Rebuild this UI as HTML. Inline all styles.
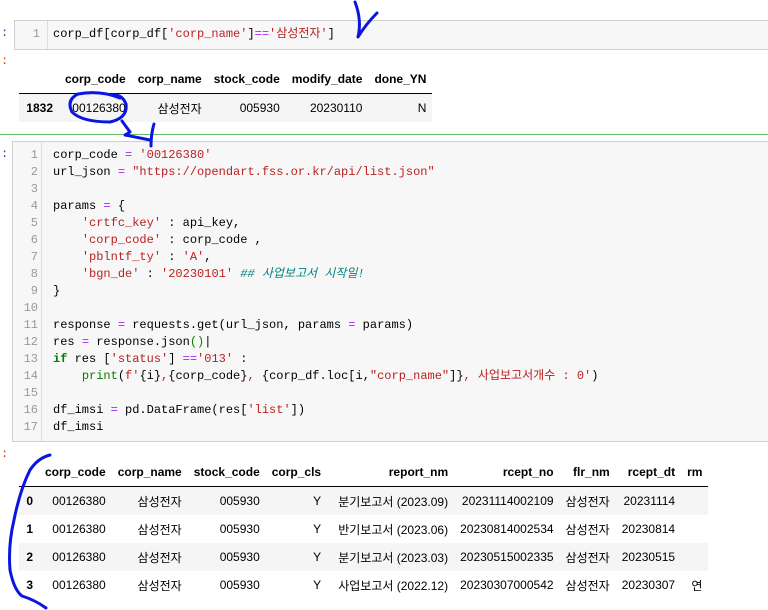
<!DOCTYPE html>
<html><head><meta charset="utf-8"><style>
body{margin:0;width:768px;height:610px;background:#fff;position:relative;overflow:hidden;font-family:"Liberation Sans","Noto Sans CJK KR",sans-serif;}
.abs{position:absolute}
.cell{position:absolute;background:#f7f7f7;border:1px solid #cfcfcf;}
.gut{position:absolute;top:0;bottom:0;border-right:1px solid #ddd;}
pre{margin:0;font-family:"Liberation Mono","Noto Sans CJK KR",monospace;font-size:12px;line-height:17px;color:#000;position:absolute}
.ln{color:#999;text-align:right}
.s{color:#ba2121}.o{color:#aa22ff}.k{color:#008000}.c{color:#008080;font-style:italic}
table{position:absolute;border-collapse:collapse;font-size:12px;color:#000}
th{font-weight:bold;text-align:right;padding:0 6px;height:28px}
td{text-align:right;padding:0 6px;height:28px}
thead tr{border-bottom:1px solid #000}
tbody tr.sh{background:#f5f5f5}
.pr{position:absolute;font-size:12px;font-family:"Liberation Mono",monospace}
</style></head><body>
<div class="pr" style="left:1px;top:26px;color:#303f9f">:</div>
<div class="cell" style="left:14px;top:20px;width:754px;height:28px">
 <div class="gut" style="left:0;width:32px"></div>
 <pre class="ln" style="left:0;width:25px;top:5px">1</pre>
 <pre style="left:38px;top:5px">corp_df[corp_df[<span class="s">'corp_name'</span>]<span class="o">==</span><span class="s">'삼성전자'</span>]</pre>
</div>
<div class="pr" style="left:1px;top:54px;color:#d84315">:</div>
<table style="left:19px;top:65px">
<thead><tr><th style="width:28px"></th><th>corp_code</th><th>corp_name</th><th>stock_code</th><th>modify_date</th><th>done_YN</th></tr></thead>
<tbody><tr class="sh"><th>1832</th><td>00126380</td><td>삼성전자</td><td>005930</td><td>20230110</td><td>N</td></tr></tbody>
</table>
<div class="abs" style="left:0;top:134px;width:768px;height:1px;background:#66bb6a"></div>
<div class="pr" style="left:1px;top:147px;color:#303f9f">:</div>
<div class="cell" style="left:12px;top:141px;width:756px;height:299px">
 <div class="gut" style="left:0;width:28px"></div>
 <pre class="ln" style="left:0;width:25px;top:5px">1
2
3
4
5
6
7
8
9
10
11
12
13
14
15
16
17</pre>
<pre style="left:40px;top:5px">corp_code <span class="o">=</span> <span class="s">'00126380'</span>
url_json <span class="o">=</span> <span class="s">"https://opendart.fss.or.kr/api/list.json"</span>

params <span class="o">=</span> {
    <span class="s">'crtfc_key'</span> : api_key,
    <span class="s">'corp_code'</span> : corp_code ,
    <span class="s">'pblntf_ty'</span> : <span class="s">'A'</span>,
    <span class="s">'bgn_de'</span> : <span class="s">'20230101'</span> <span class="c">## 사업보고서 시작일!</span>
}

response <span class="o">=</span> requests.get(url_json, params <span class="o">=</span> params)
res <span class="o">=</span> response.json<span class="k">()</span>|
<span class="k" style="font-weight:bold">if</span> res [<span class="s">'status'</span>] <span class="o">==</span><span class="s">'013'</span> :
    <span class="k">print</span>(<span class="s">f'</span>{i}<span class="s">,</span>{corp_code}<span class="s">, </span>{corp_df.loc[i,<span class="s">"corp_name"</span>]}<span class="s">, 사업보고서개수 : 0'</span>)

df_imsi <span class="o">=</span> pd.DataFrame(res[<span class="s">'list'</span>])
df_imsi</pre>
</div>
<div class="pr" style="left:1px;top:447px;color:#d84315">:</div>
<table style="left:19px;top:458px">
<thead><tr><th style="width:8px"></th><th>corp_code</th><th>corp_name</th><th>stock_code</th><th>corp_cls</th><th style="width:115px">report_nm</th><th>rcept_no</th><th>flr_nm</th><th>rcept_dt</th><th style="text-align:left">rm</th></tr></thead>
<tbody>
<tr class="sh"><th>0</th><td>00126380</td><td>삼성전자</td><td>005930</td><td>Y</td><td>분기보고서 (2023.09)</td><td>20231114002109</td><td>삼성전자</td><td>20231114</td><td></td></tr>
<tr><th>1</th><td>00126380</td><td>삼성전자</td><td>005930</td><td>Y</td><td>반기보고서 (2023.06)</td><td>20230814002534</td><td>삼성전자</td><td>20230814</td><td></td></tr>
<tr class="sh"><th>2</th><td>00126380</td><td>삼성전자</td><td>005930</td><td>Y</td><td>분기보고서 (2023.03)</td><td>20230515002335</td><td>삼성전자</td><td>20230515</td><td></td></tr>
<tr><th>3</th><td>00126380</td><td>삼성전자</td><td>005930</td><td>Y</td><td>사업보고서 (2022.12)</td><td>20230307000542</td><td>삼성전자</td><td>20230307</td><td>연</td></tr>
</tbody></table>
<svg class="abs" style="left:0;top:0" width="768" height="610" fill="none" stroke="#0a16e0" stroke-width="3" stroke-linecap="round" stroke-linejoin="round">
<path d="M355 2 Q362 20 358 37 Q366 24 377 13"/>
<path d="M120 98 Q100 90 78 94 Q66 100 72 112 Q82 122 110 122 Q128 118 126 104 Q122 94 112 95"/>
<path d="M122 121 L130 132 L125 135 L150 140 M154 124 Q151 134 151 146"/>
<path d="M50 455 Q38 458 30 470 Q20 490 14 520 Q8 545 10 570 Q14 590 22 596 Q35 600 46 608"/>
</svg>
</body></html>
